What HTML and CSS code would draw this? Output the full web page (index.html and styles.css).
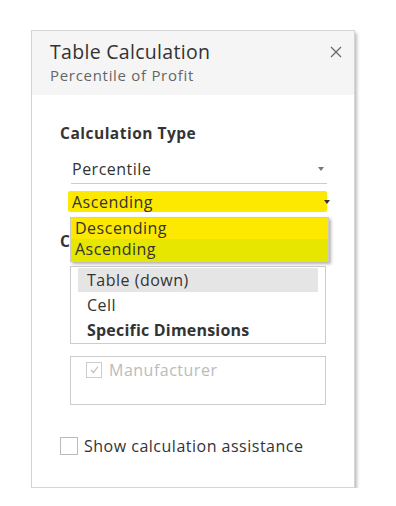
FILE: index.html
```html
<!DOCTYPE html>
<html>
<head>
<meta charset="utf-8">
<link rel="stylesheet" href="styles.css">
</head>
<body>
<div class="panel">
  <div class="header">
    <div class="titles">
      <div class="title">Table Calculation</div>
      <div class="subtitle">Percentile of Profit</div>
    </div>
    <svg class="close" width="12" height="12" viewBox="0 0 12 12"><path d="M1 1L11 11M11 1L1 11" stroke="#666" stroke-width="1.2" fill="none"/></svg>
  </div>
  <div class="body">
    <div class="label">Calculation Type</div>
    <div class="select first"><span>Percentile</span><span class="arrow"></span></div>
    <div class="select-wrap">
      <div class="select hl"><span>Ascending</span><span class="arrow dark"></span></div>
      <div class="menu">
        <div class="opt">Descending</div>
        <div class="opt sel">Ascending</div>
      </div>
    </div>
    <div class="label second">Compute Using</div>
    <div class="list">
      <div class="item active">Table (down)</div>
      <div class="item">Cell</div>
      <div class="item bold">Specific Dimensions</div>
    </div>
    <div class="dims">
      <div class="dim"><span class="cb checked"><svg width="11" height="10" viewBox="0 0 11 10"><path d="M2 5L4.5 7.5L9 1.5" stroke="#bbb" stroke-width="1.2" fill="none"/></svg></span><span>Manufacturer</span></div>
    </div>
    <div class="assist"><span class="cb big"></span><span>Show calculation assistance</span></div>
  </div>
</div>
</body>
</html>
```
FILE: styles.css
```css
html, body { margin: 0; padding: 0; background: #fff; }
body { font-family: "Open Sans", "Liberation Sans", sans-serif; color: #333; letter-spacing: 0.5px; }
.panel {
  margin: 30px 0 0 31px;
  width: 324px;
  height: 458px;
  border: 1px solid #d4d4d4;
  background: #fff;
  box-shadow: 2px 3px 3px rgba(0,0,0,0.25);
  box-sizing: border-box;
}
.header {
  background: #f5f5f5;
  height: 64px;
  display: flex;
  justify-content: space-between;
  padding: 9px 12px 0 18px;
  box-sizing: border-box;
}
.title { font-size: 19.5px; line-height: 24px; color: #333; letter-spacing: 0.3px; }
.subtitle { font-size: 15px; line-height: 20px; color: #666; margin-top: 1px; letter-spacing: 0.7px; }
.close { margin-top: 6px; }
.body { padding: 28px 28px 0 28px; position: relative; }
.label { font-size: 15.5px; font-weight: bold; line-height: 20px; color: #333; letter-spacing: 0.5px; }
.select {
  display: flex; justify-content: space-between; align-items: center;
  margin-left: 11px; width: 256px; box-sizing: border-box;
  font-size: 16px; line-height: 22px; padding: 0 3px 0 1px;
}
.select.first { margin-top: 15px; border-bottom: 1px solid #ccc; padding-bottom: 3px; }
.select-wrap { position: relative; margin-top: 7px; }
.select.hl { background: #fde900; margin-left: 8px; width: 259px; padding-left: 4px; height: 21px; border-radius: 2px; }
.arrow { width: 0; height: 0; border-left: 3px solid transparent; border-right: 3px solid transparent; border-top: 4px solid #777; }
.arrow.dark { border-top-color: #333; margin-right: -6px; }
.menu {
  position: absolute; left: 10px; top: 26px; width: 257px;
  background: #fff; border: 1px solid #ccc; box-shadow: 2px 2px 3px rgba(0,0,0,0.3);
  z-index: 2;
}
.opt { font-size: 16px; line-height: 21px; padding-left: 4px; background: #fde900; }
.opt.sel { background: #e6e600; padding-bottom: 1px; }
.label.second { margin-top: 19px; }
.list {
  margin: 15px 0 0 10px; width: 256px; height: 78px;
  border: 1px solid #ccc; box-sizing: border-box; padding: 1px 7px;
}
.item { font-size: 16px; line-height: 24px; padding-left: 9px; margin-top: 1px; }
.item.active { background: #e5e5e5; margin-top: 0; }
.item.bold { font-weight: bold; letter-spacing: 0.2px; }
.dims {
  margin: 12px 0 0 10px; width: 256px; height: 49px;
  border: 1px solid #ccc; box-sizing: border-box; padding: 3px 15px;
}
.dim { display: flex; align-items: center; gap: 7px; color: #bbb; font-size: 16px; line-height: 20px; }
.cb { width: 16px; height: 16px; border: 1px solid #ccc; box-sizing: border-box; display: inline-flex; align-items: center; justify-content: center; background: #fff; }
.cb.big { width: 18px; height: 18px; border-color: #bbb; }
.assist { display: flex; align-items: center; gap: 6px; margin-top: 30px; font-size: 16px; color: #333; }
```
